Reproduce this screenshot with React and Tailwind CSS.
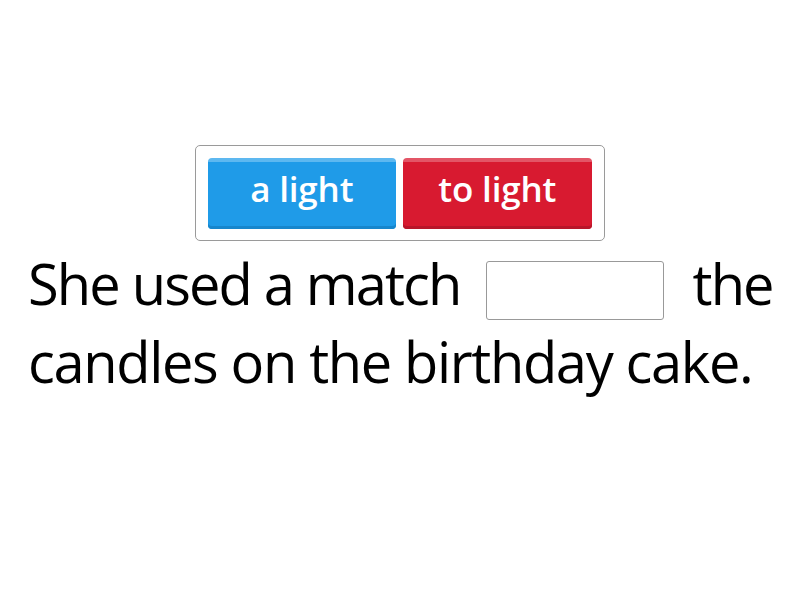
import React from 'react';

const App = () => {
    return (
        <div className="w-[800px] h-[600px] bg-white font-['Open_Sans',sans-serif]">
            <div className="pt-[145px] flex justify-center">
                <div className="ml-[-1px] w-[410px] h-[96px] border border-[#9a9a9a] rounded-[5px] flex items-center gap-[7px] px-[12px]">
                    <div className="w-[189px] h-[71px] rounded-[4px] bg-[#1f9be8] border-t-[4px] border-[#5db8f0] shadow-[inset_0_-3px_0_#1786cc] flex items-center justify-center text-white text-[35px] font-semibold tracking-[-0.005em] pb-[12px]">
                        a light
                    </div>
                    <div className="w-[189px] h-[71px] rounded-[4px] bg-[#d81a30] border-t-[4px] border-[#e35566] shadow-[inset_0_-3px_0_#b8162a] flex items-center justify-center text-white text-[35px] font-semibold tracking-[-0.005em] pb-[12px]">
                        to light
                    </div>
                </div>
            </div>
            <div className="mt-[3px] pl-[28px] pr-[10px] text-[56px] leading-[78px] text-black">
                <div className="flex items-start tracking-[-0.033em]">
                    <span>She used a match</span>
                    <span className="mt-[17px] ml-[25px] w-[178px] h-[59px] border border-[#999] rounded-[3px]"></span>
                    <span className="ml-[29px]">the</span>
                </div>
                <div className="tracking-[-0.024em]">candles on the birthday cake.</div>
            </div>
        </div>
    );
};

export default App;
